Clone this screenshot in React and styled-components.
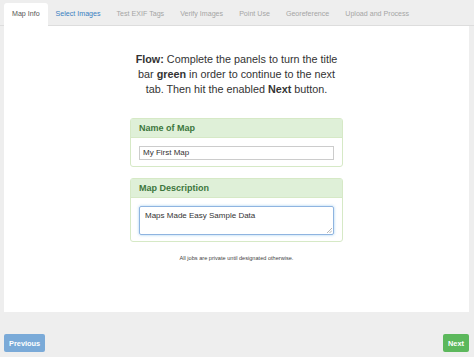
import React from 'react';
import styled, { createGlobalStyle } from 'styled-components';

const GlobalStyle = createGlobalStyle`
  html, body {
    margin: 0;
    padding: 0;
    background: #eeeeee;
    font-family: "Liberation Sans", Arial, sans-serif;
  }
`;

const Page = styled.div`
  height: 357px;
  display: flex;
  flex-direction: column;
  background: #eeeeee;
`;

const TabBar = styled.ul`
  list-style: none;
  margin: 0;
  padding: 3px 5px 0 4px;
  display: flex;
  border-bottom: 1px solid #dddddd;
  height: 22px;
`;

const Tab = styled.li`
  padding: 0 8px;
  font-size: 7.1px;
  line-height: 22px;
  color: ${props => (props.active ? '#555555' : props.link ? '#3a7fc1' : '#a5a5a5')};
  background: ${props => (props.active ? '#ffffff' : 'transparent')};
  border-radius: 3px 3px 0 0;
  white-space: nowrap;
  margin-bottom: -1px;
`;

const Content = styled.div`
  background: #ffffff;
  margin: 0 5px 0 4px;
  height: 286px;
  display: flex;
  flex-direction: column;
  align-items: center;
  padding-top: 26px;
  box-sizing: border-box;
`;

const Flow = styled.p`
  margin: 0;
  width: 206px;
  text-align: center;
  font-size: 10.8px;
  line-height: 15px;
  color: #333333;
  b {
    font-weight: bold;
  }
`;

const Panel = styled.div`
  width: 213px;
  margin-top: ${props => props.top}px;
  border: 1px solid #d6e9c6;
  border-radius: 3px;
  box-sizing: border-box;
  background: #ffffff;
`;

const PanelHeader = styled.div`
  background: #dff0d8;
  color: #3c763d;
  font-size: 9px;
  font-weight: bold;
  height: 18px;
  line-height: 18px;
  padding: 0 8px;
  border-bottom: 1px solid #d6e9c6;
`;

const PanelBody = styled.div`
  padding: 8px 8px 6px;
`;

const Input = styled.div`
  height: 14px;
  border: 1px solid #cccccc;
  box-sizing: border-box;
  font-size: 8px;
  line-height: 12px;
  padding: 0 3px;
  color: #333333;
`;

const TextArea = styled.div`
  position: relative;
  height: 29px;
  border: 1px solid #8fb4e0;
  border-radius: 2px;
  box-shadow: 0 0 3px rgba(102, 175, 233, 0.6);
  box-sizing: border-box;
  font-size: 8px;
  line-height: 12px;
  padding: 3px 5px;
  color: #333333;
`;

const Grip = styled.svg`
  position: absolute;
  right: 1px;
  bottom: 1px;
`;

const Note = styled.p`
  margin: 13px 0 0;
  font-size: 5.6px;
  color: #444444;
`;

const Footer = styled.div`
  flex: 1;
  display: flex;
  justify-content: space-between;
  align-items: flex-start;
  padding: 22px 5px 0 4px;
`;

const Button = styled.button`
  height: 18px;
  padding: 0 ${props => props.pad}px;
  border: none;
  border-radius: 2px;
  font-family: inherit;
  font-size: 7.4px;
  font-weight: bold;
  color: #ffffff;
  background: ${props => props.color};
`;

const tabs = ['Map Info', 'Select Images', 'Test EXIF Tags', 'Verify Images', 'Point Use', 'Georeference', 'Upload and Process'];

export default function App() {
  return (
    <Page>
      <GlobalStyle />
      <TabBar>
        {tabs.map((t, i) => (
          <Tab key={t} active={i === 0} link={i === 1}>{t}</Tab>
        ))}
      </TabBar>
      <Content>
        <Flow>
          <b>Flow:</b> Complete the panels to turn the title bar <b>green</b> in order to continue to the next tab. Then hit the enabled <b>Next</b> button.
        </Flow>
        <Panel top={21}>
          <PanelHeader>Name of Map</PanelHeader>
          <PanelBody>
            <Input>My First Map</Input>
          </PanelBody>
        </Panel>
        <Panel top={11}>
          <PanelHeader>Map Description</PanelHeader>
          <PanelBody>
            <TextArea>
              Maps Made Easy Sample Data
              <Grip width="5" height="5" viewBox="0 0 5 5">
                <path d="M5 0 L0 5 M5 2.5 L2.5 5" stroke="#999" strokeWidth="0.7" />
              </Grip>
            </TextArea>
          </PanelBody>
        </Panel>
        <Note>All jobs are private until designated otherwise.</Note>
      </Content>
      <Footer>
        <Button color="#7aaad8" pad={5}>Previous</Button>
        <Button color="#5cb85c" pad={5}>Next</Button>
      </Footer>
    </Page>
  );
}
